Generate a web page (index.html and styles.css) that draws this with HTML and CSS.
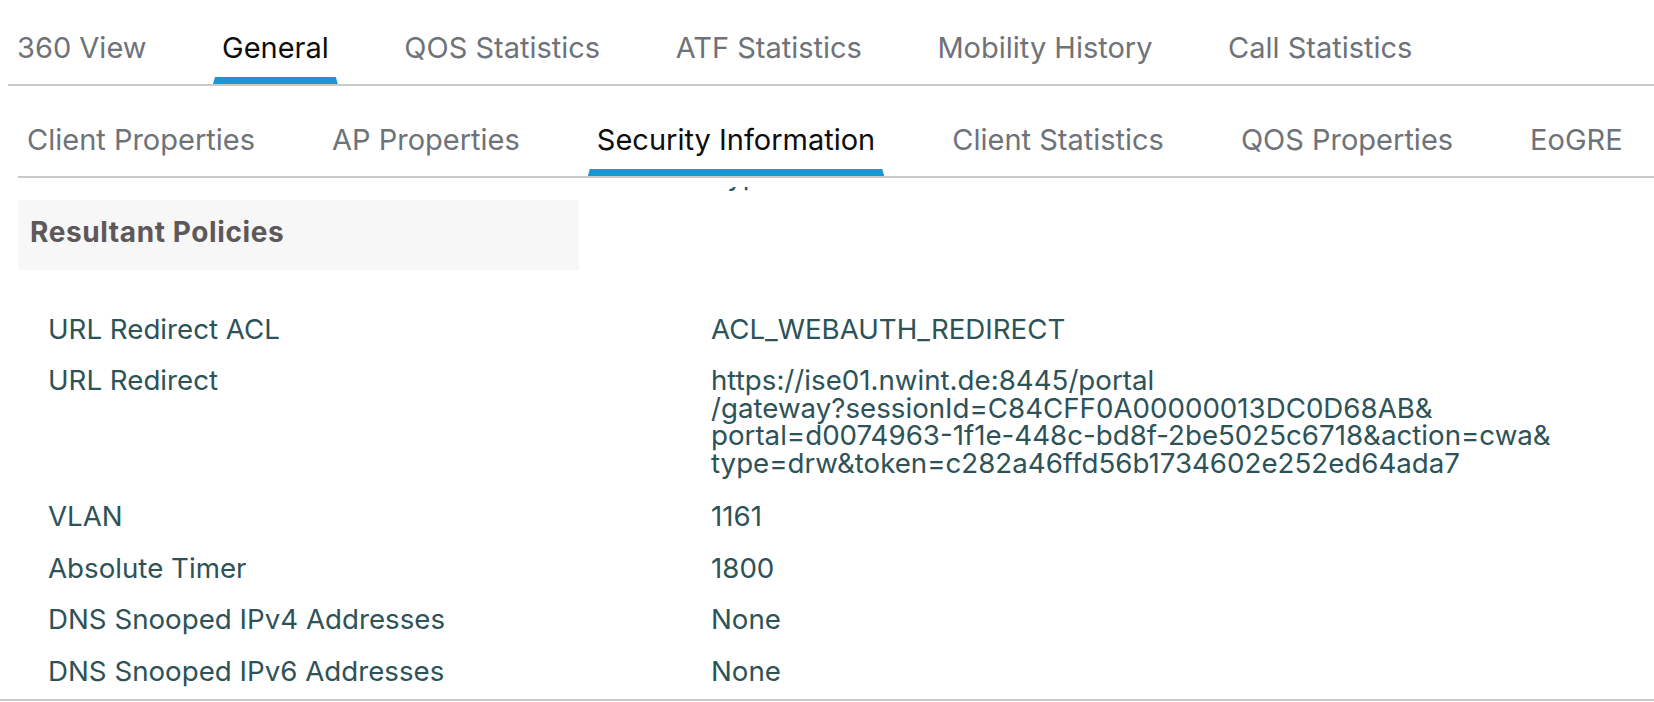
FILE: index.html
```html
<!DOCTYPE html>
<html lang="en">
<head>
<meta charset="utf-8">
<title>Client Details - Security Information</title>
<link rel="stylesheet" href="styles.css">
</head>
<body>
  <nav class="tabs tabs-main">
    <div class="tab">360 View</div>
    <div class="tab active">General</div>
    <div class="tab">QOS Statistics</div>
    <div class="tab">ATF Statistics</div>
    <div class="tab">Mobility History</div>
    <div class="tab">Call Statistics</div>
  </nav>
  <nav class="tabs tabs-sub">
    <div class="tab">Client Properties</div>
    <div class="tab">AP Properties</div>
    <div class="tab active">Security Information</div>
    <div class="tab">Client Statistics</div>
    <div class="tab">QOS Properties</div>
    <div class="tab">EoGRE</div>
  </nav>
  <main class="content">
    <div class="viewport">
      <div class="scroll-inner">
        <div class="row first">
          <div class="label"></div>
          <div class="value">Type</div>
        </div>
        <div class="section-head">Resultant Policies</div>
        <div class="rows">
          <div class="row">
            <div class="label">URL Redirect ACL</div>
            <div class="value">ACL_WEBAUTH_REDIRECT</div>
          </div>
          <div class="row multi">
            <div class="label">URL Redirect</div>
            <div class="value">https://ise01.nwint.de:8445/portal<br>/gateway?sessionId=C84CFF0A00000013DC0D68AB&amp;<br>portal=d0074963-1f1e-448c-bd8f-2be5025c6718&amp;action=cwa&amp;<br>type=drw&amp;token=c282a46ffd56b1734602e252ed64ada7</div>
          </div>
          <div class="row">
            <div class="label">VLAN</div>
            <div class="value">1161</div>
          </div>
          <div class="row">
            <div class="label">Absolute Timer</div>
            <div class="value">1800</div>
          </div>
          <div class="row">
            <div class="label">DNS Snooped IPv4 Addresses</div>
            <div class="value">None</div>
          </div>
          <div class="row">
            <div class="label">DNS Snooped IPv6 Addresses</div>
            <div class="value">None</div>
          </div>
        </div>
      </div>
    </div>
  </main>
</body>
</html>
```
FILE: styles.css
```css
html, body {
  margin: 0;
  padding: 0;
  background: #ffffff;
}

body {
  font-family: Inter, "Liberation Sans", Arial, sans-serif;
  width: 1654px;
  height: 702px;
  overflow: hidden;
}

.tabs {
  display: flex;
  gap: 59px;
  border-bottom: 2px solid #c8c9cc;
}

.tabs-main {
  margin-left: 8px;
  gap: 57.5px;
}

.tabs-sub {
  margin-left: 18px;
}

.tab {
  position: relative;
  padding: 0 9px;
  font-size: 29px;
  line-height: 34px;
  color: #6e7279;
  white-space: nowrap;
}

.tabs-main .tab {
  padding-top: 31px;
  padding-bottom: 19px;
}

.tabs-sub .tab {
  padding-top: 37px;
  padding-bottom: 19px;
}

.tab.active {
  color: #0d0d0d;
}

.tab.active::after {
  content: "";
  position: absolute;
  left: 0;
  right: 0;
  bottom: 0;
  height: 7px;
  background: #1b96d4;
  clip-path: polygon(2px 0, calc(100% - 2px) 0, 100% 100%, 0 100%);
}

.content {
  padding-top: 9px;
  border-bottom: 2px solid #c8c9cc;
}

.viewport {
  height: 512px;
  overflow: hidden;
}

.scroll-inner {
  margin-top: -37px;
}

.section-head {
  margin-left: 18px;
  width: 549px;
  height: 70px;
  padding-left: 12px;
  background: #f7f7f7;
  font-size: 28px;
  font-weight: bold;
  letter-spacing: 0.6px;
  line-height: 64px;
  color: #5d585a;
}

.rows {
  margin-top: 34px;
}

.row {
  display: grid;
  grid-template-columns: 663px 1fr;
  padding: 12px 0 12px 48px;
  font-size: 27.7px;
  line-height: 27.5px;
  color: #2d5257;
}

.row.first {
  padding-bottom: 10px;
}

.row.multi {
  padding-bottom: 14px;
}

.value {
  white-space: nowrap;
}
```
